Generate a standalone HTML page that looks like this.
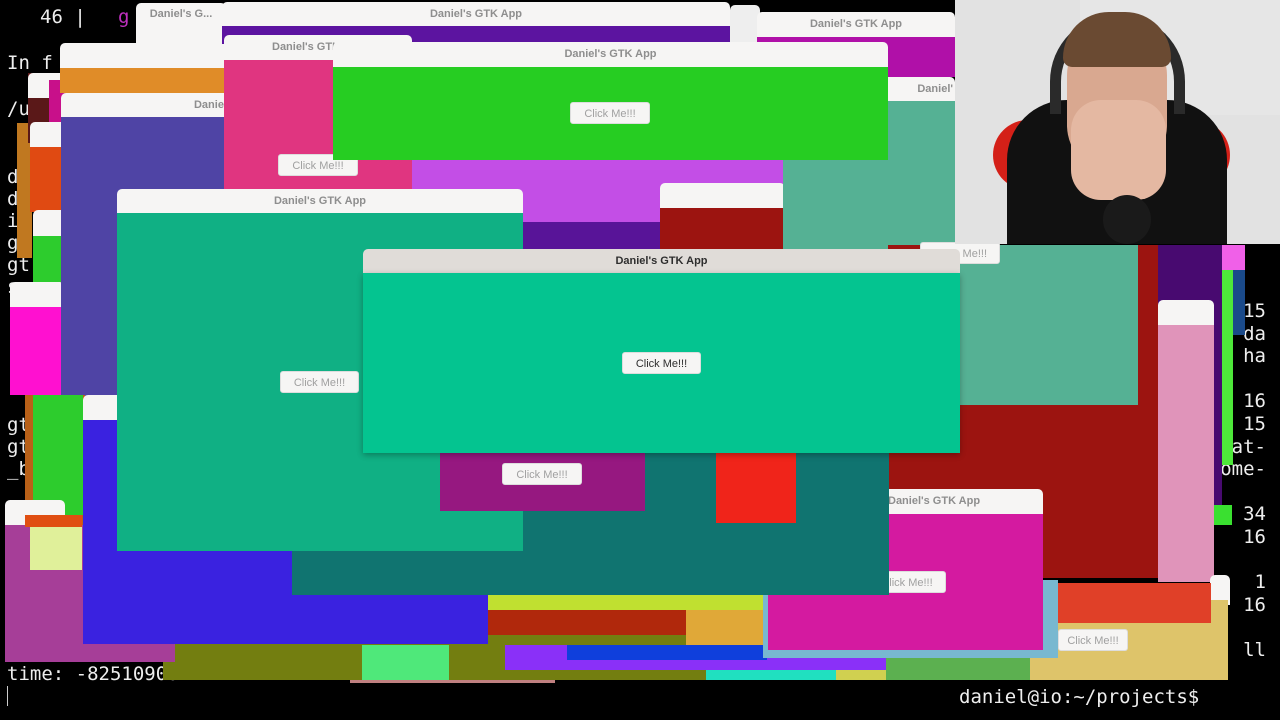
<!DOCTYPE html>
<html><head><meta charset="utf-8"><style>
*{margin:0;padding:0;box-sizing:border-box}
body{width:1280px;height:720px;background:#000;position:relative;overflow:hidden;font-family:"Liberation Sans","DejaVu Sans",sans-serif}
.r{position:absolute}
.t{position:absolute;color:#eee;font-family:"DejaVu Sans Mono","Liberation Mono",monospace;font-size:19px;white-space:pre;line-height:22px}
.tb{position:absolute;background:#f6f5f4;color:#8e8e8e;font-weight:bold;font-size:11px;text-align:center;line-height:25px;border-radius:5px 5px 0 0;overflow:hidden;white-space:nowrap}
.btn{position:absolute;background:#f6f5f4;color:#a0a0a0;font-size:11px;text-align:center;line-height:22px;border-radius:3px;border:1px solid #ddd}
</style></head><body>
<!-- terminal text left -->
<div class="t" style="left:40px;top:6px">46 |</div>
<div class="t" style="left:118px;top:6px;color:#c030c0">g</div>
<div class="t" style="left:7px;top:52px">In f</div>
<div class="t" style="left:7px;top:98px">/u</div>
<div class="t" style="left:7px;top:166px">d
d
i
g
gt
s</div>
<div class="t" style="left:7px;top:414px">gt
gt
_b</div>
<div class="t" style="left:7px;top:663px">time: -82510900</div>
<div class="r" style="left:7px;top:686px;width:1px;height:20px;background:#ccc"></div>
<div class="t" style="right:14px;top:300px;text-align:right;line-height:22.6px">15
da
ha

16
15
at-
ome-

34
16

1
16

ll</div>
<div class="t" style="left:959px;top:686px">daniel@io:~/projects$</div>

<!-- bottom band -->
<div class="r" style="left:163px;top:618px;width:560px;height:62px;background:#737e10"></div>
<div class="r" style="left:486px;top:595px;width:280px;height:18px;background:#c0e030"></div>
<div class="r" style="left:486px;top:610px;width:200px;height:25px;background:#b0280c"></div>
<div class="r" style="left:686px;top:610px;width:80px;height:35px;background:#e0a838"></div>
<div class="r" style="left:505px;top:645px;width:495px;height:25px;background:#8a30f8"></div>
<div class="r" style="left:567px;top:645px;width:200px;height:15px;background:#0f3fdc"></div>
<div class="r" style="left:706px;top:670px;width:130px;height:10px;background:#20e0c0"></div>
<div class="r" style="left:836px;top:670px;width:50px;height:10px;background:#d0d050"></div>
<div class="r" style="left:886px;top:655px;width:150px;height:25px;background:#5cb050"></div>
<div class="r" style="left:362px;top:645px;width:87px;height:38px;background:#4fe87a"></div>
<div class="r" style="left:350px;top:680px;width:205px;height:3px;background:#c08080"></div>

<!-- left stack -->
<div class="r" style="left:17px;top:123px;width:15px;height:135px;background:#c07820"></div>
<div class="r" style="left:28px;top:73px;width:40px;height:70px;background:#5a1818"></div>
<div class="tb" style="left:28px;top:73px;width:40px;height:25px"></div>
<div class="r" style="left:49px;top:80px;width:20px;height:45px;background:#c8108a"></div>
<div class="tb" style="left:30px;top:122px;width:40px;height:25px"></div>
<div class="r" style="left:30px;top:147px;width:35px;height:65px;background:#e04a12"></div>
<div class="tb" style="left:33px;top:210px;width:35px;height:26px"></div>
<div class="r" style="left:33px;top:236px;width:35px;height:46px;background:#2dcc2d"></div>
<div class="tb" style="left:60px;top:43px;width:170px;height:25px"></div>
<div class="r" style="left:60px;top:68px;width:165px;height:25px;background:#e08c28"></div>
<div class="tb" style="left:10px;top:282px;width:55px;height:25px"></div>
<div class="r" style="left:10px;top:307px;width:52px;height:88px;background:#ff10d0"></div>
<div class="tb" style="left:61px;top:93px;width:170px;height:24px;text-align:right;padding-right:4px">Daniel</div>
<div class="r" style="left:61px;top:117px;width:165px;height:280px;background:#4f44a5"></div>
<div class="r" style="left:25px;top:395px;width:60px;height:130px;background:#b86018"></div>
<div class="r" style="left:33px;top:395px;width:50px;height:120px;background:#2dcc2d"></div>
<div class="tb" style="left:5px;top:500px;width:60px;height:25px"></div>
<div class="r" style="left:5px;top:525px;width:170px;height:137px;background:#a63e98"></div>
<div class="r" style="left:25px;top:515px;width:57px;height:12px;background:#e04f12"></div>
<div class="r" style="left:30px;top:527px;width:52px;height:43px;background:#e0f09a"></div>
<div class="tb" style="left:83px;top:395px;width:40px;height:25px"></div>
<div class="r" style="left:83px;top:420px;width:405px;height:224px;background:#3a22e0"></div>

<!-- top windows -->
<div class="tb" style="left:136px;top:3px;width:90px;height:40px;line-height:22px">Daniel's G...</div>
<div class="tb" style="left:222px;top:2px;width:508px;height:24px">Daniel's GTK App</div>
<div class="r" style="left:222px;top:26px;width:508px;height:18px;background:#5c14a0"></div>
<div class="tb" style="left:730px;top:5px;width:30px;height:40px;background:#eee"></div>
<div class="tb" style="left:757px;top:12px;width:198px;height:25px">Daniel's GTK App</div>
<div class="r" style="left:757px;top:37px;width:198px;height:40px;background:#b010a8"></div>
<div class="r" style="left:412px;top:150px;width:380px;height:75px;background:#c34ee6"></div>
<div class="r" style="left:523px;top:222px;width:140px;height:28px;background:#581498"></div>
<div class="tb" style="left:660px;top:183px;width:125px;height:25px"></div>
<div class="r" style="left:660px;top:208px;width:125px;height:42px;background:#9c1410"></div>
<div class="tb" style="left:783px;top:77px;width:172px;height:24px;text-align:right;padding-right:2px">Daniel'</div>
<div class="r" style="left:783px;top:101px;width:172px;height:150px;background:#55b194"></div>
<div class="tb" style="left:224px;top:35px;width:188px;height:25px;text-align:left;padding-left:48px">Daniel's GTK</div>
<div class="r" style="left:224px;top:60px;width:188px;height:130px;background:#e03580"></div>
<div class="btn" style="left:278px;top:154px;width:80px;height:22px">Click Me!!!</div>
<div class="tb" style="left:333px;top:42px;width:555px;height:25px">Daniel's GTK App</div>
<div class="r" style="left:333px;top:67px;width:555px;height:93px;background:#26cd22"></div>
<div class="btn" style="left:570px;top:102px;width:80px;height:22px">Click Me!!!</div>

<!-- right side -->
<div class="r" style="left:1138px;top:245px;width:85px;height:60px;background:#480a70"></div>
<div class="r" style="left:1222px;top:245px;width:23px;height:25px;background:#f060e8"></div>
<div class="r" style="left:1198px;top:300px;width:24px;height:205px;background:#480a70"></div>
<div class="r" style="left:1222px;top:270px;width:11px;height:195px;background:#4ee83a"></div>
<div class="r" style="left:1233px;top:270px;width:12px;height:65px;background:#1a4a8a"></div>
<div class="r" style="left:1210px;top:505px;width:22px;height:20px;background:#3ae030"></div>
<div class="tb" style="left:1158px;top:300px;width:56px;height:25px"></div>
<div class="r" style="left:1158px;top:325px;width:56px;height:257px;background:#e094ba"></div>
<div class="r" style="left:888px;top:245px;width:270px;height:333px;background:#9c1410"></div>
<div class="r" style="left:960px;top:245px;width:178px;height:160px;background:#55b194"></div>
<div class="btn" style="left:920px;top:242px;width:80px;height:22px;text-align:right;padding-right:12px">Me!!!</div>
<div class="tb" style="left:1210px;top:575px;width:20px;height:30px"></div>
<div class="r" style="left:1030px;top:600px;width:198px;height:80px;background:#dec46a"></div>
<div class="r" style="left:1058px;top:583px;width:153px;height:40px;background:#e04028"></div>
<div class="btn" style="left:1058px;top:629px;width:70px;height:22px">Click Me!!!</div>

<!-- middle -->
<div class="r" style="left:763px;top:580px;width:295px;height:78px;background:#78b8d0"></div>
<div class="tb" style="left:768px;top:489px;width:275px;height:25px;text-align:left;padding-left:120px">Daniel's GTK App</div>
<div class="r" style="left:768px;top:514px;width:275px;height:136px;background:#d41aa0"></div>
<div class="btn" style="left:868px;top:571px;width:78px;height:22px">Click Me!!!</div>
<div class="r" style="left:292px;top:450px;width:597px;height:145px;background:#107470"></div>
<div class="r" style="left:716px;top:450px;width:80px;height:73px;background:#f0241a"></div>

<div class="tb" style="left:117px;top:189px;width:406px;height:24px">Daniel's GTK App</div>
<div class="r" style="left:117px;top:213px;width:406px;height:338px;background:#10b084"></div>
<div class="btn" style="left:280px;top:371px;width:79px;height:22px">Click Me!!!</div>
<div class="r" style="left:440px;top:450px;width:205px;height:61px;background:#961880"></div>
<div class="btn" style="left:502px;top:463px;width:80px;height:22px">Click Me!!!</div>

<div class="tb" style="left:363px;top:249px;width:597px;height:24px;background:#e0dcd8;color:#2e2e2e">Daniel's GTK App</div>
<div class="r" style="left:363px;top:273px;width:597px;height:180px;background:#04c490;box-shadow:0 2px 6px rgba(0,0,0,.3)"></div>
<div class="btn" style="left:622px;top:352px;width:79px;height:22px;color:#2e2e2e">Click Me!!!</div>

<!-- webcam -->
<div class="r" style="left:955px;top:0;width:325px;height:244px;background:#e2e2e2;overflow:hidden">
 <div class="r" style="left:125px;top:0;width:200px;height:115px;background:#e6e6e6"></div>
 <div class="r" style="left:38px;top:120px;width:80px;height:70px;background:#d42018;border-radius:40px 0 0 40px"></div>
 <div class="r" style="left:210px;top:120px;width:65px;height:70px;background:#d42018;border-radius:0 40px 40px 0"></div>
 <div class="r" style="left:52px;top:100px;width:220px;height:150px;background:#111;border-radius:60px 60px 0 0"></div>
 <div class="r" style="left:95px;top:14px;width:135px;height:100px;border:11px solid #2a2a2a;border-bottom:none;border-radius:68px 68px 0 0"></div>
 <div class="r" style="left:112px;top:30px;width:100px;height:145px;background:#d9a890;border-radius:45px 45px 50px 50px"></div>
 <div class="r" style="left:108px;top:12px;width:108px;height:55px;background:#6a4a32;border-radius:50px 50px 10px 10px"></div>
 <div class="r" style="left:116px;top:100px;width:95px;height:100px;background:#e4b8a2;border-radius:30px"></div>
 <div class="r" style="left:148px;top:195px;width:48px;height:49px;background:#1a1a1a;border-radius:24px"></div>
</div>
</body></html>
